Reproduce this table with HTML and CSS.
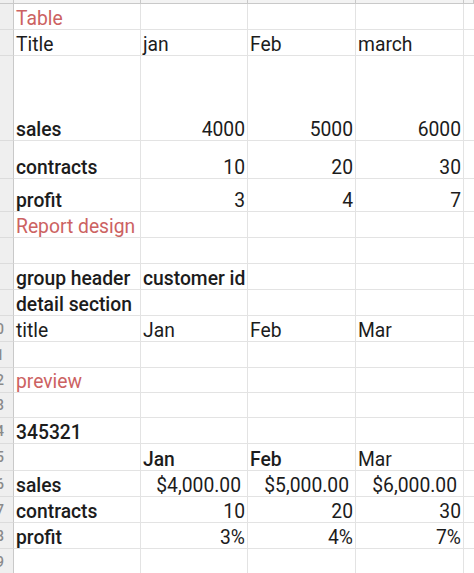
FILE: index.html
```html
<!DOCTYPE html>
<html>
<head>
<meta charset="utf-8">
<link rel="stylesheet" href="styles.css">
</head>
<body>
<div class="sheet">
  <div class="row top"><div class="hd"></div><div class="c"></div><div class="c"></div><div class="c"></div><div class="c"></div><div class="c last"></div></div>

  <div class="row h26"><div class="hd"></div><div class="c red">Table</div><div class="c"></div><div class="c"></div><div class="c"></div><div class="c last"></div></div>
  <div class="row h26"><div class="hd"></div><div class="c">Title</div><div class="c">jan</div><div class="c">Feb</div><div class="c">march</div><div class="c last"></div></div>
  <div class="row h85"><div class="hd"></div><div class="c b">sales</div><div class="c num">4000</div><div class="c num">5000</div><div class="c num">6000</div><div class="c last"></div></div>
  <div class="row h38"><div class="hd"></div><div class="c b">contracts</div><div class="c num">10</div><div class="c num">20</div><div class="c num">30</div><div class="c last"></div></div>
  <div class="row h33"><div class="hd"></div><div class="c b">profit</div><div class="c num">3</div><div class="c num">4</div><div class="c num">7</div><div class="c last"></div></div>
  <div class="row h26"><div class="hd"></div><div class="c red">Report design</div><div class="c"></div><div class="c"></div><div class="c"></div><div class="c last"></div></div>
  <div class="row h26"><div class="hd"></div><div class="c"></div><div class="c"></div><div class="c"></div><div class="c"></div><div class="c last"></div></div>
  <div class="row h26"><div class="hd"></div><div class="c b">group header</div><div class="c b">customer id</div><div class="c"></div><div class="c"></div><div class="c last"></div></div>
  <div class="row h26"><div class="hd"></div><div class="c b">detail section</div><div class="c"></div><div class="c"></div><div class="c"></div><div class="c last"></div></div>
  <div class="row h26"><div class="hd"><span>10</span></div><div class="c">title</div><div class="c">Jan</div><div class="c">Feb</div><div class="c">Mar</div><div class="c last"></div></div>
  <div class="row h26"><div class="hd"><span>11</span></div><div class="c"></div><div class="c"></div><div class="c"></div><div class="c"></div><div class="c last"></div></div>
  <div class="row h25"><div class="hd"><span>12</span></div><div class="c red">preview</div><div class="c"></div><div class="c"></div><div class="c"></div><div class="c last"></div></div>
  <div class="row h25"><div class="hd"><span>13</span></div><div class="c"></div><div class="c"></div><div class="c"></div><div class="c"></div><div class="c last"></div></div>
  <div class="row h26"><div class="hd"><span>14</span></div><div class="c b">345321</div><div class="c"></div><div class="c"></div><div class="c"></div><div class="c last"></div></div>
  <div class="row h27"><div class="hd"><span>15</span></div><div class="c"></div><div class="c b">Jan</div><div class="c b">Feb</div><div class="c">Mar</div><div class="c last"></div></div>
  <div class="row h26"><div class="hd"><span>16</span></div><div class="c b">sales</div><div class="c num cur">$4,000.00</div><div class="c num cur">$5,000.00</div><div class="c num cur">$6,000.00</div><div class="c last"></div></div>
  <div class="row h26"><div class="hd"><span>17</span></div><div class="c b">contracts</div><div class="c num">10</div><div class="c num">20</div><div class="c num">30</div><div class="c last"></div></div>
  <div class="row h26"><div class="hd"><span>18</span></div><div class="c b">profit</div><div class="c num">3%</div><div class="c num">4%</div><div class="c num">7%</div><div class="c last"></div></div>
  <div class="row h26"><div class="hd"><span>19</span></div><div class="c"></div><div class="c"></div><div class="c"></div><div class="c"></div><div class="c last"></div></div>
</div>
</body>
</html>
```

FILE: styles.css
```css
html, body {
  margin: 0;
  padding: 0;
  background: #ffffff;
}
body {
  width: 474px;
  height: 573px;
  overflow: hidden;
  font-family: Roboto, "Liberation Sans", sans-serif;
  color: #1c1c1c;
}
.sheet {
  display: flex;
  flex-direction: column;
}
.row {
  display: grid;
  grid-template-columns: 14px 127px 107px 108px 108px 1fr;
  height: 26px;
}
.row.top { height: 4px; }
.row.h25 { height: 25px; }
.row.h26 { height: 26px; }
.row.h27 { height: 27px; }
.row.h33 { height: 33px; }
.row.h38 { height: 38px; }
.row.h85 { height: 85px; }

.c {
  box-sizing: border-box;
  border-right: 1px solid #e3e3e3;
  border-bottom: 1px solid #e3e3e3;
  font-size: 19.3px;
  line-height: 20px;
  padding: 0 2px 0 2px;
  display: flex;
  align-items: flex-end;
  white-space: nowrap;
  overflow: visible;
  min-width: 0;
}
.c.num { justify-content: flex-end; padding-right: 2px; }
.c.cur { padding-right: 6px; }
.c.red { color: #cc6262; }
.c.b { font-weight: 500; }
.c.last { border-right: none; }

.hd {
  box-sizing: border-box;
  background: #efefef;
  border-right: 1px solid #c9c9c9;
  border-bottom: 1px solid #dcdcdc;
  display: flex;
  align-items: center;
  justify-content: flex-end;
  padding-right: 9px;
  overflow: hidden;
  font-size: 14px;
  color: #8a8a8a;
  font-weight: 500;
}
.row.top .c {
  background: #f3f3f3;
  border-bottom: 1px solid #c9c9c9;
  border-right: 1px solid #c9c9c9;
}
.row.top .hd { border-bottom-color: #c9c9c9; }
```
